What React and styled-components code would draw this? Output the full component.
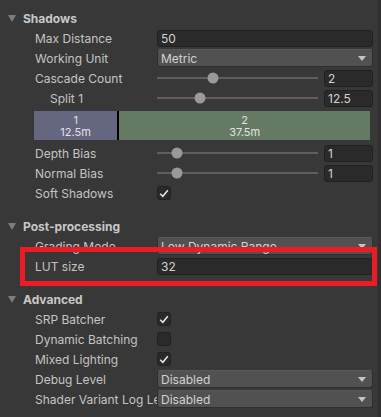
import React from "react";
import styled, { createGlobalStyle } from "styled-components";

const Global = createGlobalStyle`
  html, body { margin: 0; padding: 0; background: #383838; }
  body { font-family: Inter, "Noto Sans", sans-serif; font-size: 12px; color: #c4c4c4; }
`;

const Panel = styled.div`
  position: relative;
  width: 381px;
  height: 417px;
  box-sizing: border-box;
  background: #383838;
  padding-top: 8px;
  overflow: hidden;
  border-right: 3px solid #2f2f2f;
`;

const Section = styled.div`
  display: flex;
  flex-direction: column;
  margin-bottom: ${(p) => (p.$last ? 0 : 13)}px;
`;

const Header = styled.div`
  display: flex;
  align-items: center;
  height: 20px;
  padding-left: 8px;
  gap: 7px;
  font-weight: 700;
  color: #c8c8c8;
`;

const Caret = styled.span`
  width: 0;
  height: 0;
  border-left: 4px solid transparent;
  border-right: 4px solid transparent;
  border-top: 7px solid #7d7d7d;
  margin-top: 1px;
`;

const Row = styled.div`
  display: grid;
  grid-template-columns: ${(p) => (p.$indent ? 107 : 122)}px 216px;
  align-items: center;
  height: 20px;
  padding-left: ${(p) => (p.$indent ? 50 : 35)}px;
`;

const Label = styled.div`
  white-space: nowrap;
  overflow: hidden;
  color: #c4c4c4;
`;

const Input = styled.div`
  height: 17px;
  box-sizing: border-box;
  background: #2a2a2a;
  border: 1px solid #212121;
  border-radius: 3px;
  padding-left: 3px;
  display: flex;
  align-items: center;
  color: #d2d2d2;
`;

const Dropdown = styled.div`
  height: 18px;
  box-sizing: border-box;
  background: #515151;
  border: 1px solid #2f2f2f;
  border-top-color: #585858;
  border-radius: 3px;
  padding-left: 3px;
  padding-right: 6px;
  display: flex;
  align-items: center;
  justify-content: space-between;
  color: #d2d2d2;
`;

const Arrow = styled.span`
  width: 0;
  height: 0;
  border-left: 4px solid transparent;
  border-right: 4px solid transparent;
  border-top: 5px solid #c4c4c4;
`;

const SliderWrap = styled.div`
  display: grid;
  grid-template-columns: 1fr 49px;
  gap: 6px;
  align-items: center;
`;

const Track = styled.div`
  position: relative;
  height: 2px;
  background: #5e5e5e;
`;

const Thumb = styled.span`
  position: absolute;
  top: 50%;
  width: 11px;
  height: 11px;
  border-radius: 50%;
  background: #999999;
  transform: translate(-50%, -50%);
`;

const Check = styled.div`
  width: 14px;
  height: 14px;
  box-sizing: border-box;
  background: #2a2a2a;
  border: 1px solid #212121;
  border-radius: 3px;
  display: flex;
  align-items: center;
  justify-content: center;
`;

const CascadeBar = styled.div`
  display: flex;
  height: 29px;
  margin: 3px 8px 3px 34px;
  font-size: 11px;
  color: #e2e2e2;
`;

const Segment = styled.div`
  flex: ${(p) => p.$grow};
  background: ${(p) => p.$color};
  display: flex;
  flex-direction: column;
  align-items: center;
  justify-content: center;
`;

const SegText = styled.div`
  height: 12px;
  line-height: 12px;
  overflow: visible;
`;

const Divider = styled.div`
  width: 2px;
  background: #000;
`;

const Highlight = styled.div`
  position: absolute;
  left: 20px;
  top: 247px;
  width: 357px;
  height: 39px;
  box-sizing: border-box;
  border: 5px solid #ed1c24;
`;

const Tick = () => (
  <svg width="10" height="9" viewBox="0 0 10 9">
    <path d="M1.2 4.8 L3.8 7.3 L8.8 1.3" fill="none" stroke="#e8e8e8" strokeWidth="1.5" />
  </svg>
);

const Field = ({ label, indent, children }) => (
  <Row $indent={indent}>
    <Label>{label}</Label>
    {children}
  </Row>
);

const Slider = ({ pos, value }) => (
  <SliderWrap>
    <Track>
      <Thumb style={{ left: `${pos}px` }} />
    </Track>
    <Input>{value}</Input>
  </SliderWrap>
);

const Select = ({ value }) => (
  <Dropdown>
    <span>{value}</span>
    <Arrow />
  </Dropdown>
);

export default function App() {
  return (
    <>
      <Global />
      <Panel>
        <Section>
          <Header><Caret />Shadows</Header>
          <Field label="Max Distance"><Input>50</Input></Field>
          <Field label="Working Unit"><Select value="Metric" /></Field>
          <Field label="Cascade Count"><Slider pos={56} value="2" /></Field>
          <Field label="Split 1" indent><Slider pos={43} value="12.5" /></Field>
          <CascadeBar>
            <Segment $grow={84} $color="#65667f"><SegText>1</SegText><SegText>12.5m</SegText></Segment>
            <Divider />
            <Segment $grow={253} $color="#657a63"><SegText>2</SegText><SegText>37.5m</SegText></Segment>
          </CascadeBar>
          <Field label="Depth Bias"><Slider pos={20} value="1" /></Field>
          <Field label="Normal Bias"><Slider pos={20} value="1" /></Field>
          <Field label="Soft Shadows"><Check><Tick /></Check></Field>
        </Section>
        <Section>
          <Header><Caret />Post-processing</Header>
          <Field label="Grading Mode"><Select value="Low Dynamic Range" /></Field>
          <Field label="LUT size"><Input>32</Input></Field>
        </Section>
        <Section $last>
          <Header><Caret />Advanced</Header>
          <Field label="SRP Batcher"><Check><Tick /></Check></Field>
          <Field label="Dynamic Batching"><Check /></Field>
          <Field label="Mixed Lighting"><Check><Tick /></Check></Field>
          <Field label="Debug Level"><Select value="Disabled" /></Field>
          <Field label="Shader Variant Log Level"><Select value="Disabled" /></Field>
        </Section>
        <Highlight />
      </Panel>
    </>
  );
}
